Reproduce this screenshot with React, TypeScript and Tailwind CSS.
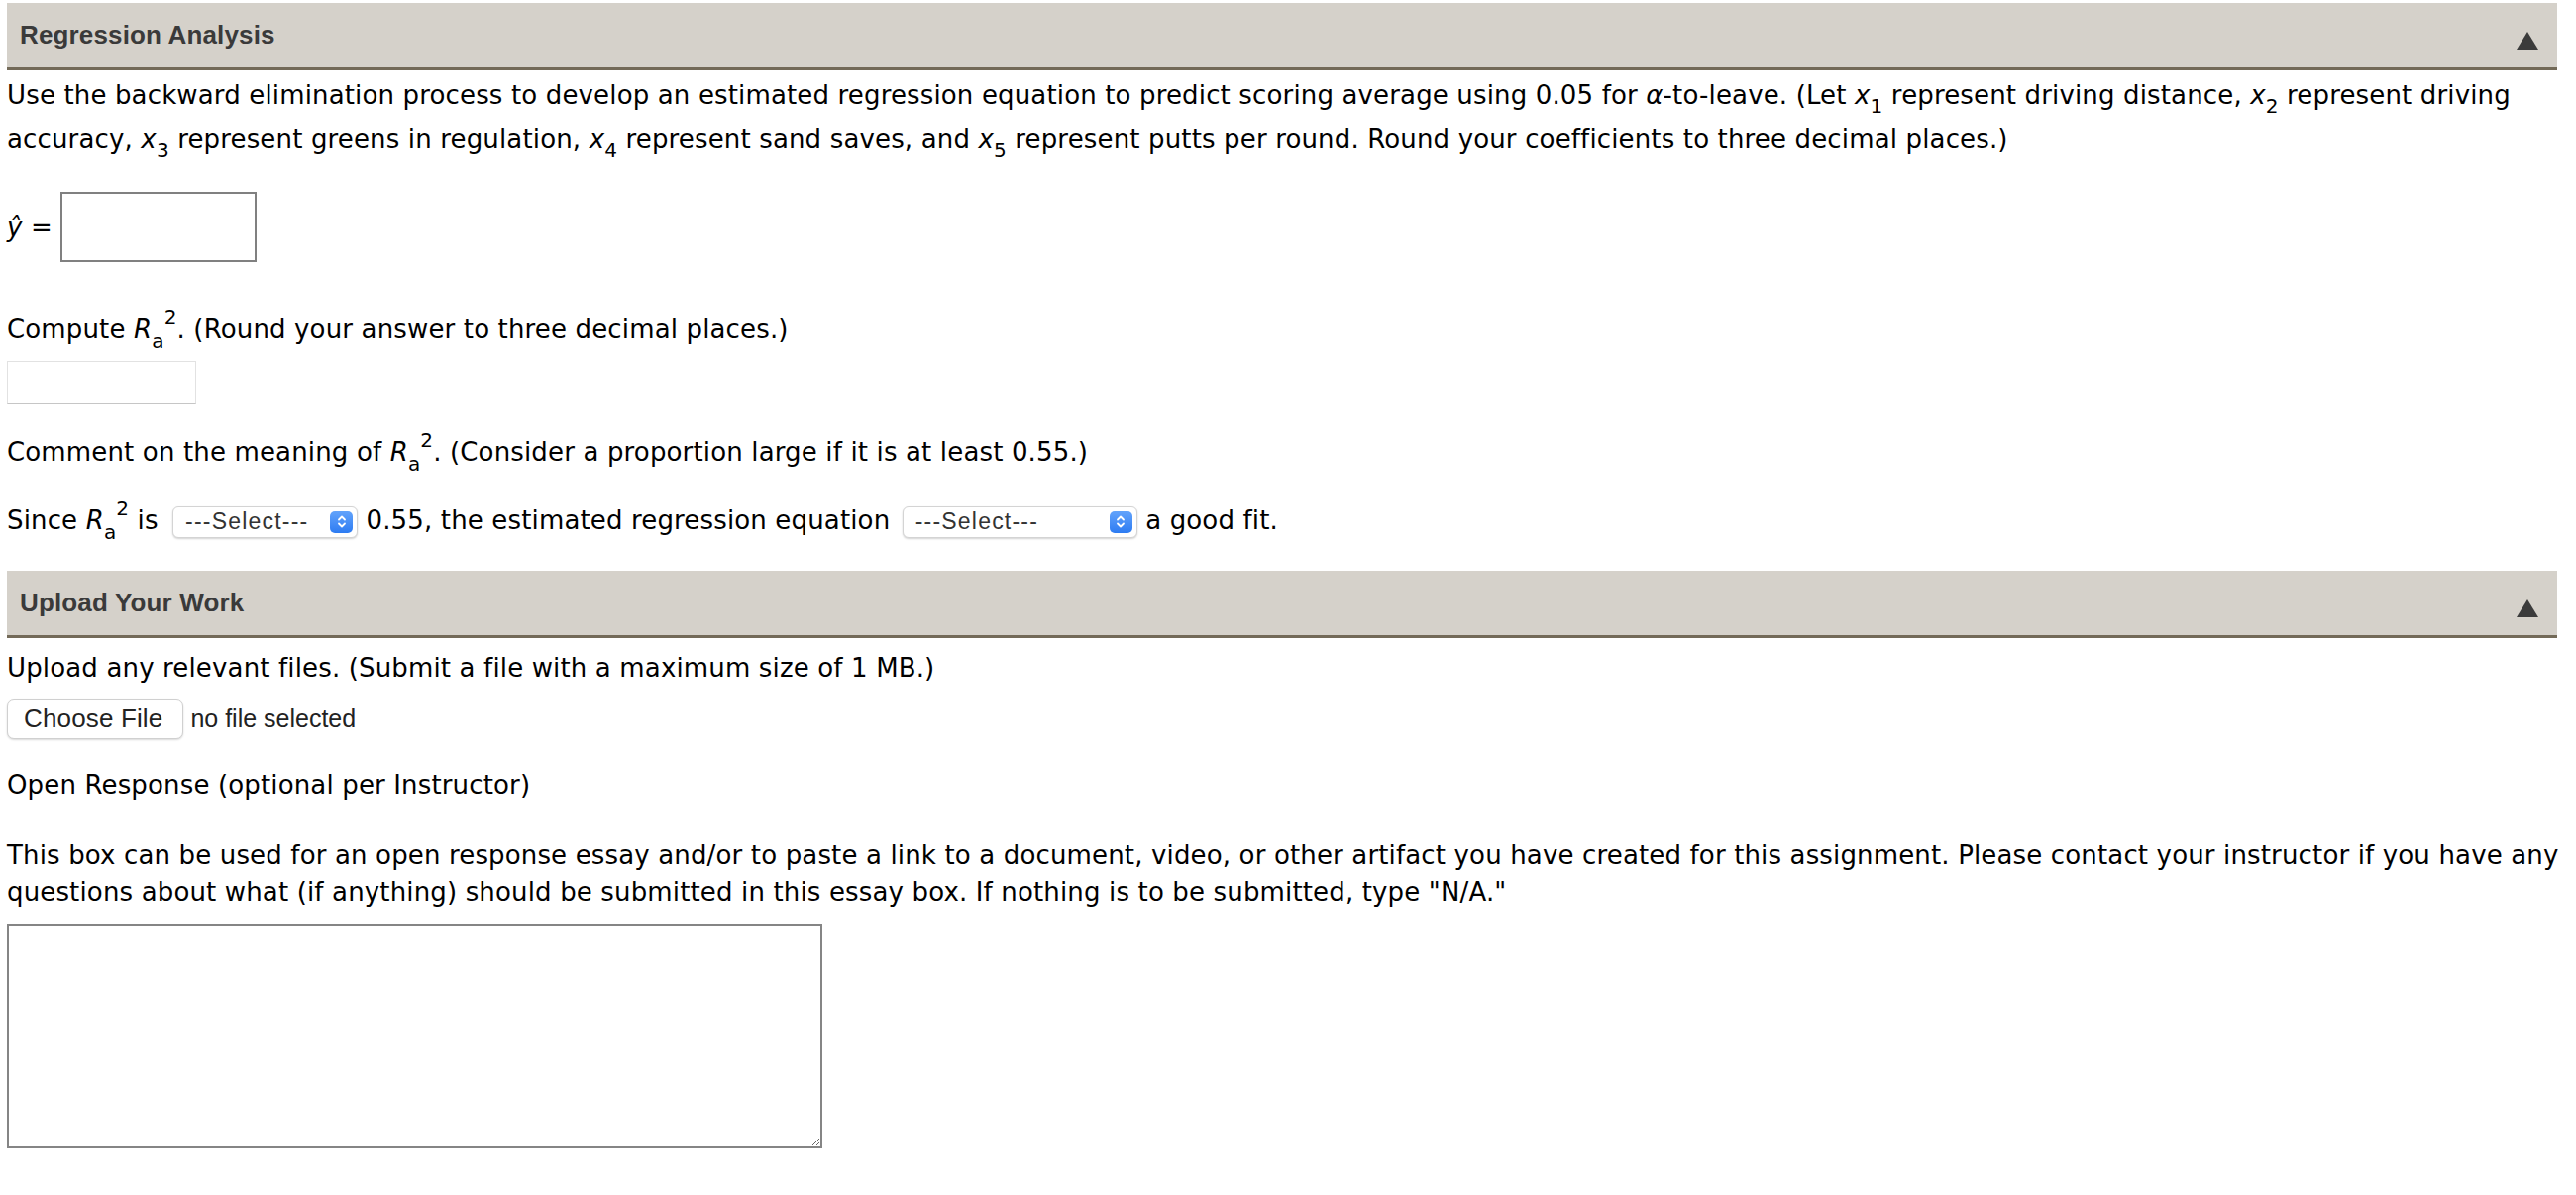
import React from 'react';

// Collapsible section header with the little up-arrow on the right.
function SectionHeader({ title }: { title: string }) {
  return (
    <div className="mr-[11px] flex h-[68px] items-center justify-between border-b-[3px] border-[#736a58] bg-[#d5d1ca] pl-[13px] pr-[19px]">
      <span className="font-['Liberation_Sans',Arial,sans-serif] text-[26px] font-bold text-[#3a3a3a]">
        {title}
      </span>
      <svg width="22" height="18" viewBox="0 0 22 18" className="mt-[10px]">
        <polygon points="11,0 22,18 0,18" fill="#3b3b3b" />
      </svg>
    </div>
  );
}

// sub/superscripts get zero line-height so they don't push the line box around
function Sub({ children }: { children: React.ReactNode }) {
  return <span className="align-[-9px] text-[20px] not-italic leading-[0px]">{children}</span>;
}

function Sup({ children }: { children: React.ReactNode }) {
  return <span className="align-[14px] text-[20px] not-italic leading-[0px]">{children}</span>;
}

function X({ n }: { n: number }) {
  return (
    <span>
      <i>x</i>
      <Sub>{n}</Sub>
    </span>
  );
}

function Ra2() {
  return (
    <span>
      <i>R</i>
      <span className="align-[-10px] text-[20px] leading-[0px]">a</span>
      <Sup>2</Sup>
    </span>
  );
}

function FakeSelect({ className }: { className: string }) {
  return (
    <span
      className={`inline-flex h-[32px] items-center justify-between rounded-[6px] border border-[#d4d4d4] bg-white pl-[12px] pr-[4px] align-middle font-['Liberation_Sans',Arial,sans-serif] text-[23px] leading-none tracking-[1.2px] text-[#333] shadow-[0_1px_2px_rgba(0,0,0,0.18)] ${className}`}
    >
      <span>---Select---</span>
      <span className="flex h-[22px] w-[23px] items-center justify-center rounded-[5px] bg-gradient-to-b from-[#62a3fb] to-[#2c7bf2]">
        <svg width="10" height="15" viewBox="0 0 10 15" fill="none">
          <path d="M2 5.5 L5 2.5 L8 5.5" stroke="white" strokeWidth="1.8" strokeLinecap="round" strokeLinejoin="round" />
          <path d="M2 9.5 L5 12.5 L8 9.5" stroke="white" strokeWidth="1.8" strokeLinecap="round" strokeLinejoin="round" />
        </svg>
      </span>
    </span>
  );
}

export default function App() {
  return (
    <div className="min-h-screen bg-white pl-[7px] pr-[8px] pt-[3px] font-['DejaVu_Sans',Verdana,sans-serif] text-[26px] tracking-[0.15px] text-black">
      <SectionHeader title="Regression Analysis" />

      <p className="mt-[3px] leading-[44px]">
        Use the backward elimination process to develop an estimated regression equation to predict scoring
        average using 0.05 for <i>α</i>-to-leave. (Let <X n={1} /> represent driving distance, <X n={2} /> represent
        driving accuracy, <X n={3} /> represent greens in regulation, <X n={4} /> represent sand saves, and{' '}
        <X n={5} /> represent putts per round. Round your coefficients to three decimal places.)
      </p>

      <div className="mt-[32px] flex items-center">
        <span className="leading-[37px]">
          <i>ŷ</i> =
        </span>
        <input className="ml-[8px] h-[70px] w-[198px] border-2 border-[#808080] bg-white outline-none" />
      </div>

      <p className="mt-[50px] leading-[37px]">
        Compute <Ra2 />. (Round your answer to three decimal places.)
      </p>
      <input className="mt-[13px] block h-[44px] w-[191px] border border-[#e2e2e2] border-b-[#c6c6c6] bg-white outline-none" />

      <p className="mt-[30px] leading-[37px]">
        Comment on the meaning of <Ra2 />. (Consider a proportion large if it is at least 0.55.)
      </p>

      <p className="mt-[32px] leading-[37px]">
        Since <Ra2 /> is <FakeSelect className="ml-[6px] w-[187px]" /> 0.55, the estimated regression equation{' '}
        <FakeSelect className="ml-[4px] w-[237px]" /> a good fit.
      </p>

      <div className="mt-[32px]">
        <SectionHeader title="Upload Your Work" />
      </div>

      <p className="mt-[12px] leading-[37px]">Upload any relevant files. (Submit a file with a maximum size of 1 MB.)</p>

      <div className="mt-[12px] flex items-center">
        <button className="h-[41px] rounded-[7px] border border-[#d0d0d0] bg-white pl-[16px] pr-[20px] text-left font-['Liberation_Sans',Arial,sans-serif] text-[26px] text-[#222] shadow-[0_1px_2px_rgba(0,0,0,0.15)]">
          Choose File
        </button>
        <span className="ml-[7px] font-['Liberation_Sans',Arial,sans-serif] text-[25px] tracking-normal text-[#222]">
          no file selected
        </span>
      </div>

      <p className="mt-[28px] leading-[37px]">Open Response (optional per Instructor)</p>

      <p className="mt-[34px] leading-[37px]">
        This box can be used for an open response essay and/or to paste a link to a document, video, or other artifact
        you have created for this assignment. Please contact your instructor if you have any questions about what (if
        anything) should be submitted in this essay box. If nothing is to be submitted, type "N/A."
      </p>

      <textarea className="mt-[14px] block h-[226px] w-[823px] border-2 border-[#858585] bg-white outline-none" />
    </div>
  );
}
